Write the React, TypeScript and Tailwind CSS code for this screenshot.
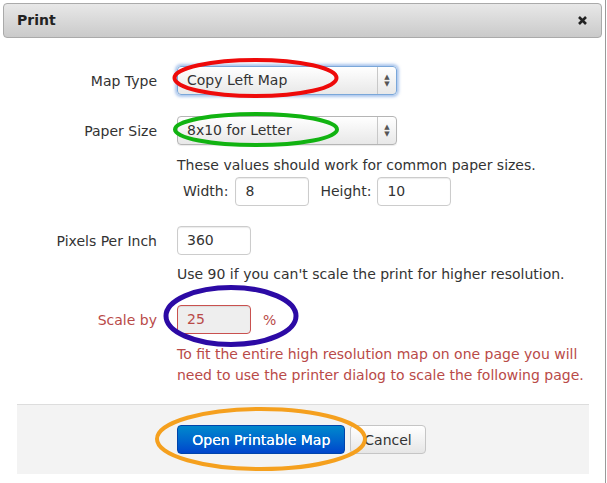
import React from 'react';

const labelCls = "w-[157px] shrink-0 text-right";

const SelectBox = ({ value, focused }: { value: string; focused?: boolean }) => (
    <div
        className={`flex items-stretch w-[220px] h-[29px] rounded-[4px] bg-gradient-to-b from-[#ffffff] to-[#e8e8e8] ${
            focused
                ? 'border border-[#7aa7d9] shadow-[0_0_3px_2px_rgba(100,150,220,0.55)]'
                : 'border border-[#b5b5b5] shadow-[0_1px_1px_rgba(0,0,0,0.08)]'
        }`}
    >
        <div className="flex-1 flex items-center pl-[9px] text-[#333]">{value}</div>
        <div className="w-[19px] border-l border-[#c8c8c8] flex flex-col items-center justify-center leading-none text-[#555]">
            <span className="text-[7px] leading-[7px]">▲</span>
            <span className="text-[7px] leading-[7px]">▼</span>
        </div>
    </div>
);

const TextInput = ({ value, width, error }: { value: string; width: string; error?: boolean }) => (
    <div
        className={`${width} h-[29px] rounded-[4px] flex items-center pl-[9px] shadow-[inset_0_1px_1px_rgba(0,0,0,0.08)] ${
            error ? 'border border-[#c9514f] bg-[#eeeeee] text-[#b94a48]' : 'border border-[#cccccc] bg-white text-[#333]'
        }`}
    >
        {value}
    </div>
);

export default function App() {
    return (
        <div className="relative w-[607px] h-[483px] bg-white overflow-hidden text-[14px] text-[#333] font-['DejaVu_Sans',Verdana,sans-serif]">
            <div className="w-[606px] h-full border-r border-[#9a9a9a] pt-[3px] pl-[3px] pr-[3px]">
                {/* Title bar */}
                <div className="h-[35px] rounded-[4px] border border-[#aaaaaa] bg-gradient-to-b from-[#e8e8e8] to-[#cacaca] flex items-center justify-between pl-[13px] pr-[14px]">
                    <span className="font-bold text-[14px] text-[#222]">Print</span>
                    <svg width="9" height="9" viewBox="0 0 9 9">
                        <path d="M1 1 L8 8 M8 1 L1 8" stroke="#222" strokeWidth="2.6" />
                    </svg>
                </div>

                {/* Form body */}
                <div className="flex flex-col mt-[28px] -ml-[3px]">
                    <div className="flex items-center gap-[20px]">
                        <div className={`${labelCls} pt-[2px]`}>Map Type</div>
                        <SelectBox value="Copy Left Map" focused />
                    </div>

                    <div className="flex items-center gap-[20px] mt-[21px]">
                        <div className={`${labelCls} pt-[2px]`}>Paper Size</div>
                        <SelectBox value="8x10 for Letter" />
                    </div>

                    <div className="pl-[177px] mt-[10px] leading-[21px]">These values should work for common paper sizes.</div>
                    <div className="pl-[183px] mt-[1px] flex items-center">
                        <span className="mr-[7px]">Width:</span>
                        <TextInput value="8" width="w-[74px]" />
                        <span className="ml-[11px] mr-[6px]">Height:</span>
                        <TextInput value="10" width="w-[74px]" />
                    </div>

                    <div className="flex items-center gap-[20px] mt-[20px]">
                        <div className={`${labelCls} pt-[2px]`}>Pixels Per Inch</div>
                        <TextInput value="360" width="w-[74px]" />
                    </div>
                    <div className="pl-[177px] mt-[9px] leading-[21px]">Use 90 if you can't scale the print for higher resolution.</div>

                    <div className="flex items-center gap-[20px] mt-[20px] text-[#b94a48]">
                        <div className={`${labelCls} pt-[2px]`}>Scale by</div>
                        <TextInput value="25" width="w-[74px]" error />
                        <span className="ml-[-8px] pt-[2px]">%</span>
                    </div>
                    <div className="pl-[177px] mt-[10px] leading-[21px] text-[#b94a48]">
                        To fit the entire high resolution map on one page you will
                        <br />
                        need to use the printer dialog to scale the following page.
                    </div>
                </div>

                {/* Footer */}
                <div className="ml-[14px] mt-[18px] w-[572px] h-[70px] bg-[#f3f3f3] border-t border-[#dddddd] flex items-center justify-center gap-[5px] pr-[3px]">
                    <button className="h-[29px] px-[14px] pt-[1px] rounded-[4px] border border-[#0044aa] bg-gradient-to-b from-[#0088cc] to-[#0044cc] text-white text-[14px] [text-shadow:0_0_0.4px_#fff]">
                        Open Printable Map
                    </button>
                    <button className="h-[29px] px-[13px] pt-[1px] rounded-[4px] border border-[#c5c5c5] bg-gradient-to-b from-[#ffffff] to-[#e6e6e6] text-[#333] text-[14px]">
                        Cancel
                    </button>
                </div>
            </div>

            {/* Annotation ellipses drawn over the dialog */}
            <svg className="absolute inset-0 pointer-events-none" width="607" height="483" viewBox="0 0 607 483">
                <ellipse cx="255.5" cy="78" rx="81" ry="18" fill="none" stroke="#ee0a0a" strokeWidth="4" />
                <ellipse cx="256" cy="129.5" rx="81" ry="15.5" fill="none" stroke="#11b311" strokeWidth="4" />
                <ellipse cx="231" cy="316" rx="65" ry="28.5" fill="none" stroke="#2c0aa5" strokeWidth="5" />
                <ellipse cx="261" cy="439" rx="104" ry="30" fill="none" stroke="#f5a01e" strokeWidth="4" />
            </svg>
        </div>
    );
}
